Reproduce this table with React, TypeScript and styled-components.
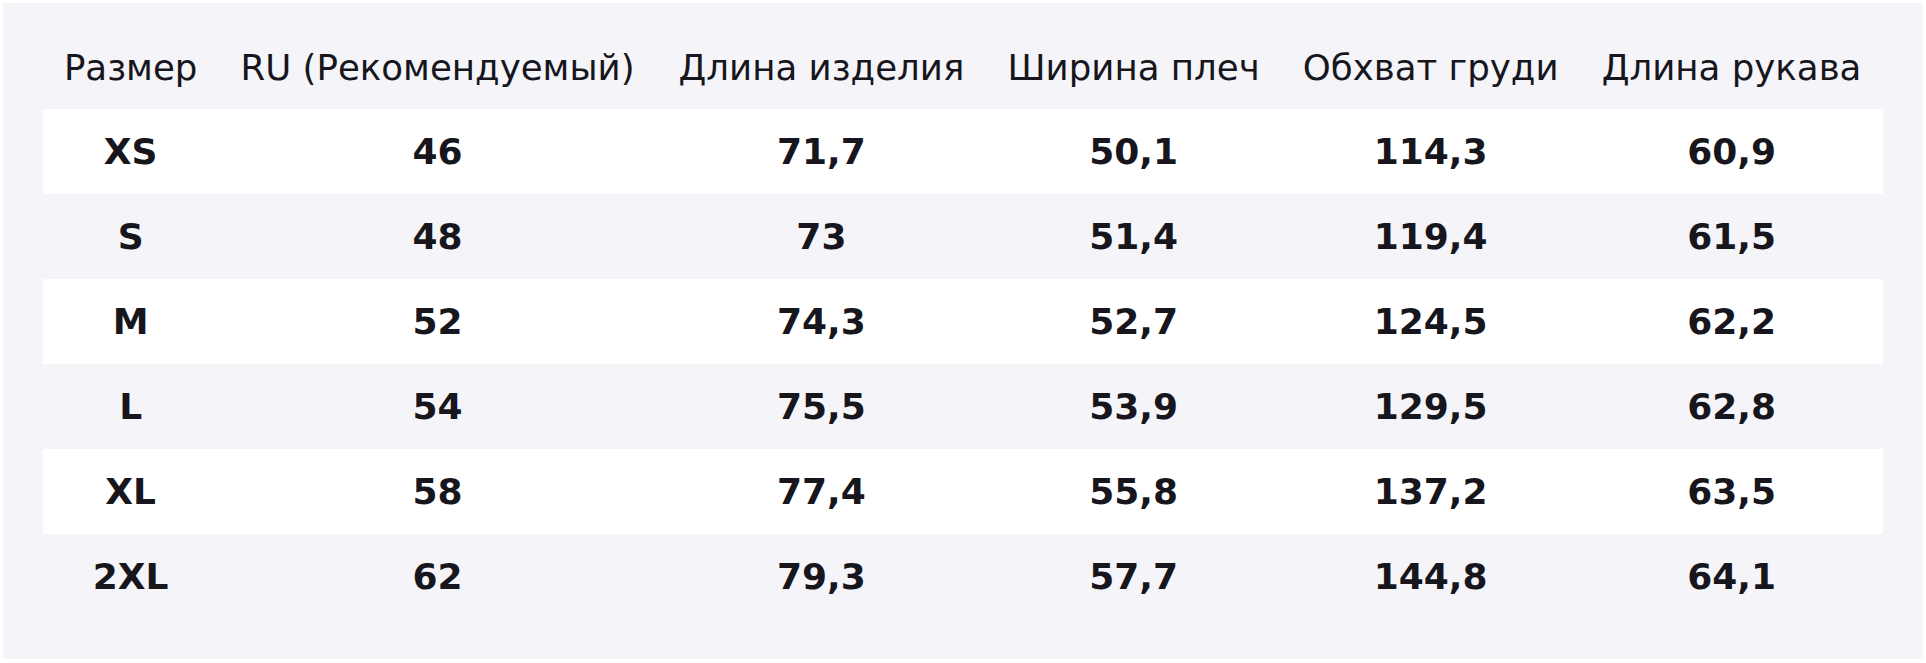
import styled, { createGlobalStyle } from 'styled-components';

const GlobalStyle = createGlobalStyle`
  html, body {
    margin: 0;
    padding: 0;
    background: #ffffff;
  }
  body {
    font-family: 'DejaVu Sans', 'Noto Sans', sans-serif;
  }
`;

// размеры изделия
const sizes = [
  { size: 'XS', ru: '46', length: '71,7', shoulders: '50,1', chest: '114,3', sleeve: '60,9' },
  { size: 'S', ru: '48', length: '73', shoulders: '51,4', chest: '119,4', sleeve: '61,5' },
  { size: 'M', ru: '52', length: '74,3', shoulders: '52,7', chest: '124,5', sleeve: '62,2' },
  { size: 'L', ru: '54', length: '75,5', shoulders: '53,9', chest: '129,5', sleeve: '62,8' },
  { size: 'XL', ru: '58', length: '77,4', shoulders: '55,8', chest: '137,2', sleeve: '63,5' },
  { size: '2XL', ru: '62', length: '79,3', shoulders: '57,7', chest: '144,8', sleeve: '64,1' },
];

const headers = ['Размер', 'RU (Рекомендуемый)', 'Длина изделия', 'Ширина плеч', 'Обхват груди', 'Длина рукава'];

const Page = styled.div`
  padding: 3px;
`;

const Panel = styled.div`
  width: 1920px;
  height: 656px;
  box-sizing: border-box;
  padding: 20px 40px 39px;
  background: #f4f4f9;
`;

const Table = styled.table`
  width: 100%;
  border-collapse: collapse;
  color: #16161c;
  font-size: 36px;
`;

const HeadCell = styled.th`
  padding: 24px 20px 20px;
  font-size: 35.6px;
  font-weight: 400;
  text-align: center;
  white-space: nowrap;
  line-height: 42px;
`;

const Row = styled.tr<{ $striped: boolean }>`
  height: 85px;
  background: ${(p) => (p.$striped ? '#ffffff' : 'transparent')};
`;

const Cell = styled.td`
  padding: 0 20px;
  font-weight: 700;
  text-align: center;
  white-space: nowrap;
  line-height: 42px;
`;

export default function App() {
  return (
    <Page>
      <GlobalStyle />
      <Panel>
        <Table>
          <thead>
            <tr>
              {headers.map((h) => (
                <HeadCell key={h}>{h}</HeadCell>
              ))}
            </tr>
          </thead>
          <tbody>
            {sizes.map((s, i) => (
              <Row key={s.size} $striped={i % 2 === 0}>
                <Cell>{s.size}</Cell>
                <Cell>{s.ru}</Cell>
                <Cell>{s.length}</Cell>
                <Cell>{s.shoulders}</Cell>
                <Cell>{s.chest}</Cell>
                <Cell>{s.sleeve}</Cell>
              </Row>
            ))}
          </tbody>
        </Table>
      </Panel>
    </Page>
  );
}
